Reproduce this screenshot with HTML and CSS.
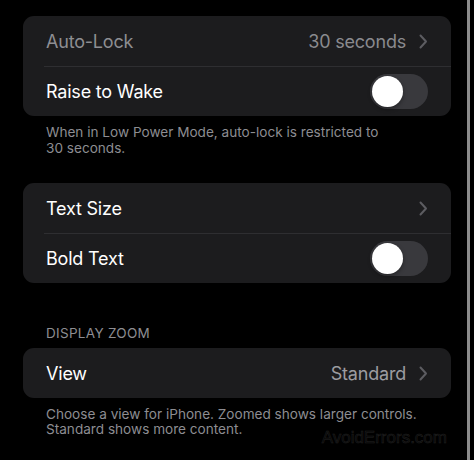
FILE: index.html
```html
<!DOCTYPE html>
<html lang="en">
<head>
<meta charset="utf-8">
<title>Display &amp; Brightness</title>
<link rel="stylesheet" href="styles.css">
</head>
<body>
<div class="frame">
  <main class="screen">
    <section class="group group-lock">
      <div class="card">
        <div class="row row-disabled">
          <span class="label">Auto-Lock</span>
          <span class="value">30 seconds</span>
          <svg class="chev" width="9" height="15" viewBox="0 0 9 15"><path d="M1.5 1.5 L7 7.5 L1.5 13.5" fill="none" stroke="currentColor" stroke-width="2" stroke-linecap="round" stroke-linejoin="round"/></svg>
        </div>
        <div class="row">
          <span class="label">Raise to Wake</span>
          <span class="switch"><span class="knob"></span></span>
        </div>
      </div>
      <p class="footer">When in Low Power Mode, auto-lock is restricted to<br>30 seconds.</p>
    </section>

    <section class="group group-text">
      <div class="card">
        <div class="row">
          <span class="label">Text Size</span>
          <svg class="chev" width="9" height="15" viewBox="0 0 9 15"><path d="M1.5 1.5 L7 7.5 L1.5 13.5" fill="none" stroke="currentColor" stroke-width="2" stroke-linecap="round" stroke-linejoin="round"/></svg>
        </div>
        <div class="row">
          <span class="label">Bold Text</span>
          <span class="switch"><span class="knob"></span></span>
        </div>
      </div>
    </section>

    <section class="group group-zoom">
      <h2 class="header">DISPLAY ZOOM</h2>
      <div class="card">
        <div class="row">
          <span class="label">View</span>
          <span class="value">Standard</span>
          <svg class="chev" width="9" height="15" viewBox="0 0 9 15"><path d="M1.5 1.5 L7 7.5 L1.5 13.5" fill="none" stroke="currentColor" stroke-width="2" stroke-linecap="round" stroke-linejoin="round"/></svg>
        </div>
      </div>
      <p class="footer footer-tight">Choose a view for iPhone. Zoomed shows larger controls.<br>Standard shows more content.</p>
      <span class="mark">AvoidErrors.com</span>
    </section>
  </main>
  <div class="edge"></div>
</div>
</body>
</html>
```

FILE: styles.css
```css
* { box-sizing: border-box; }

html, body {
  margin: 0;
  padding: 0;
  background: #000;
}

body {
  font-family: Inter, "Noto Sans", "Liberation Sans", sans-serif;
  color: #fff;
  width: 474px;
  height: 460px;
  overflow: hidden;
}

.frame {
  display: flex;
  height: 460px;
}

.screen {
  width: 467px;
  padding: 16px 16px 0 23px;
}

/* thin light rule down the right side of the screen */
.edge {
  width: 3px;
  background: #8c8c8c;
}

.group { position: relative; }

.group-text { margin-top: 27px; }
.group-zoom { margin-top: 42px; }

.card {
  background: #1c1c1e;
  border-radius: 11px;
  overflow: hidden;
}

.row {
  display: flex;
  align-items: center;
  height: 50px;
  padding: 0 23px;
  position: relative;
  font-size: 18px;
  letter-spacing: -0.2px;
}

.row + .row::before {
  content: "";
  position: absolute;
  top: 0;
  left: 21px;
  right: 0;
  height: 1px;
  background: #2e2e31;
}

.label { flex: 1; }

.value {
  color: #9c9ca1;
  margin-right: 13px;
}

.chev {
  color: #5c5c61;
  flex: none;
}

.row-disabled .label { color: #8e8e92; }
.row-disabled .value { color: #8a8a8e; }

.switch {
  width: 58px;
  height: 35px;
  border-radius: 18px;
  background: #39393d;
  padding: 2px;
  display: flex;
  align-items: center;
}

.knob {
  width: 31px;
  height: 31px;
  border-radius: 50%;
  background: #fff;
  box-shadow: 0 2px 4px rgba(0, 0, 0, 0.35);
}

.footer {
  margin: 8px 0 0 23px;
  font-size: 13.6px;
  line-height: 16px;
  color: #8d8d92;
}

.footer-tight {
  margin-top: 9px;
  line-height: 15px;
}

.header {
  margin: 0 0 7px 23px;
  font-size: 13.5px;
  font-weight: 400;
  line-height: 16px;
  color: #8d8d92;
  letter-spacing: 0.3px;
}

/* faint outlined site mark in the lower right */
.mark {
  position: absolute;
  right: 4px;
  top: 103px;
  font-family: "Liberation Sans", sans-serif;
  font-size: 17px;
  line-height: 20px;
  color: #070707;
  -webkit-text-stroke: 0.5px #222;
}
```
